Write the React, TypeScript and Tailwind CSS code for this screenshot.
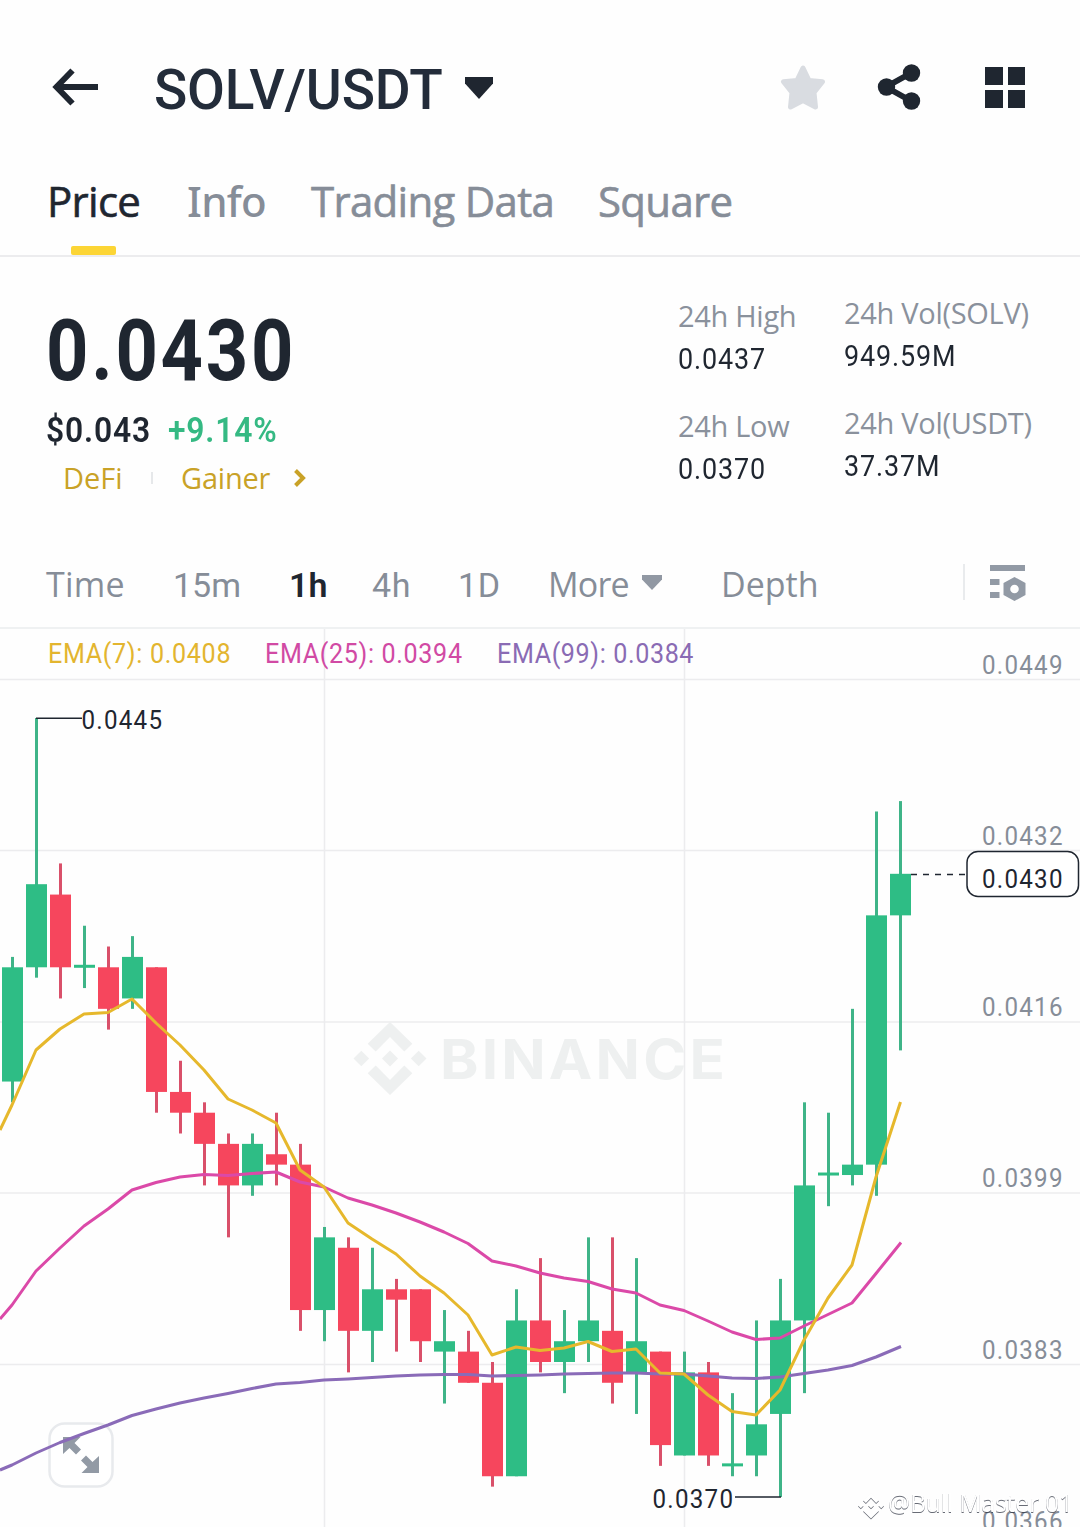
import React from "react";

type Candle = [open: number, close: number, high: number, low: number];

// Prices in ticks of 0.0001
const CANDLES: Candle[] = [
    [410, 421, 422, 408],
    [421, 429, 445, 420],
    [428, 421, 431, 418],
    [421, 421, 425, 419],
    [421, 417, 423, 415],
    [418, 422, 424, 417],
    [421, 409, 421, 407],
    [409, 407, 412, 405],
    [407, 404, 408, 400],
    [404, 400, 405, 395],
    [400, 404, 405, 399],
    [403, 402, 407, 400],
    [402, 388, 404, 386],
    [388, 395, 396, 385],
    [394, 386, 395, 382],
    [386, 390, 394, 383],
    [390, 389, 391, 384],
    [390, 385, 390, 383],
    [384, 385, 388, 379],
    [384, 381, 386, 381],
    [381, 372, 383, 371],
    [372, 387, 390, 372],
    [387, 383, 393, 382],
    [383, 385, 388, 380],
    [385, 387, 395, 383],
    [386, 381, 395, 379],
    [382, 385, 393, 378],
    [384, 375, 384, 373],
    [374, 382, 384, 374],
    [382, 374, 383, 373],
    [373, 373, 380, 372],
    [374, 377, 387, 372],
    [378, 387, 391, 370],
    [387, 400, 408, 380],
    [401, 401, 407, 398],
    [401, 402, 417, 400],
    [402, 426, 436, 399],
    [426, 430, 437, 413],
];

const EMA7 =
    "0,1130 12,1105 36,1050 60,1029 84,1014 108,1012.5 132,999 156,1023 180,1045 204,1070 228,1099 252,1110 276,1123 300,1170 324,1187 348,1223 372,1239 396,1254 420,1276 444,1293 468,1315 492,1355 516,1347 540,1350.5 564,1348 588,1341.5 612,1351.5 636,1349 660,1373 684,1374 708,1395 732,1411.5 756,1415 780,1390 804,1340 828,1298 852,1265 876,1177 900.5,1102";
const EMA25 =
    "0,1319 12,1305 36,1271 60,1248 84,1226 108,1209 132,1190 156,1182.5 180,1177 204,1174.5 228,1175.5 252,1173.5 276,1172 300,1182 324,1187 348,1198 372,1205 396,1213 420,1222 444,1232 468,1243.5 492,1261 516,1266 540,1273 564,1278 588,1281.5 612,1289 636,1293 660,1305 684,1310.5 708,1321 732,1332 756,1339.5 780,1338 804,1326 828,1314.5 852,1303 876,1273.5 901,1242.5";
const EMA99 =
    "0,1470 12,1465 36,1453 60,1442.5 84,1433.5 108,1425 132,1415.5 156,1409 180,1403 204,1398 228,1393.5 252,1388.5 276,1384 300,1382.5 324,1380 348,1379 372,1377.5 396,1376 420,1375 444,1374.5 468,1374.5 492,1376 516,1375.5 540,1375 564,1374 588,1373.5 612,1373 636,1373 660,1374 684,1374 708,1376 732,1378 756,1378.5 780,1377 804,1373.5 828,1370 852,1365.5 876,1357 901,1346.5";

const AXIS = [
    { label: "0.0449", y: 674 },
    { label: "0.0432", y: 845 },
    { label: "0.0416", y: 1016 },
    { label: "0.0399", y: 1187 },
    { label: "0.0383", y: 1359 },
    { label: "0.0366", y: 1530 },
];

const LEGEND = [
    { label: "EMA(7): 0.0408", x: 48, width: 182.5, color: "#e3b52f" },
    { label: "EMA(25): 0.0394", x: 265, width: 197, color: "#d14aa4" },
    { label: "EMA(99): 0.0384", x: 497, width: 196.5, color: "#8a6bb4" },
];

const priceY = (p: number) => 718 + (445 - p) * 10.387;

function Caret({ className }: { className: string }) {
    return (
        <svg viewBox="0 0 28 22" className={className} fill="currentColor" preserveAspectRatio="none">
            <path d="M0 0h28v6.5L14 22 0 6.5z" />
        </svg>
    );
}

function Header() {
    return (
        <div className="flex h-[174px] items-center pl-[52px] text-[#1f2630]">
            <svg viewBox="0 0 46 38" className="h-[38px] w-[46px] shrink-0" fill="none" stroke="currentColor" strokeWidth="6">
                <path d="M5 19h41M20.5 2.5 4.5 19l16 16.500" />
            </svg>
            <h1 className="ml-[56px] w-[311px] whitespace-nowrap pt-[6px] font-[Roboto,sans-serif] text-[55px] font-medium leading-none tracking-[-0.2px] text-[#232c3a]">
                SOLV/USDT
            </h1>
            <Caret className="mt-px h-[22px] w-7 shrink-0" />
            <svg viewBox="0 0 46 48" className="ml-[287px] h-12 w-[46px] shrink-0 text-[#d9dce1]" fill="currentColor" stroke="currentColor" strokeWidth="5" strokeLinejoin="round">
                <path d="M23 5 29 17.500 42.500 18.700 34 29.500 35.500 44 23 37.500 10.500 44 12 29.500 3.500 18.700 17 17.500z" />
            </svg>
            <svg viewBox="0 0 44 48" className="ml-[51px] h-12 w-11 shrink-0" fill="currentColor">
                <path d="M34 10 9 24l25 14" fill="none" stroke="currentColor" strokeWidth="6" />
                <circle cx="34.500" cy="10" r="8.700" />
                <circle cx="9.500" cy="24" r="8.700" />
                <circle cx="34.500" cy="38" r="8.700" />
            </svg>
            <div className="ml-[64px] grid h-[41px] w-10 grid-cols-2 grid-rows-2 gap-[5px]">
                <span className="bg-current" />
                <span className="bg-current" />
                <span className="bg-current" />
                <span className="bg-current" />
            </div>
        </div>
    );
}

function Tabs() {
    return (
        <div className="flex h-[83px] border-b-2 border-[#ececee] pl-[47px] font-['Open_Sans',sans-serif] text-[42px] font-medium leading-[54px] tracking-[-0.7px] text-[#868d98]">
            <div className="flex w-[140px] flex-col text-[#1f2630]">
                <span className="[-webkit-text-stroke:0.6px]">Price</span>
                <span className="ml-6 mt-[18px] h-[9px] w-[45px] rounded-[2px] bg-[#fcd535]" />
            </div>
            <div className="w-[124px] font-['Noto_Sans',sans-serif]">Info</div>
            <div className="w-[287px] [-webkit-text-stroke:0.6px]">Trading Data</div>
            <div className="[-webkit-text-stroke:0.6px]">Square</div>
        </div>
    );
}

function Stat({ label, value }: { label: string; value: string }) {
    return (
        <div className="h-[110px] whitespace-nowrap">
            <div className="h-[43px] font-['Open_Sans',sans-serif] text-[29px] leading-[41px] tracking-[-0.3px] text-[#8a919c]">{label}</div>
            <div className="h-[43px] w-fit origin-left scale-x-[0.93] font-[Roboto,sans-serif] text-[29px] leading-[43px] tracking-[0.900px] text-[#1f2630]">
                {value}
            </div>
        </div>
    );
}

function Summary() {
    return (
        <div className="flex h-[284px] pl-[46px] text-[#1f2630]">
            <div className="w-[632px] pt-[45px] font-[Roboto,sans-serif]">
                <div className="h-[98px] w-fit origin-left scale-x-[0.86] text-[86px] font-bold leading-[98px] tracking-[3.200px]">0.0430</div>
                <div className="flex h-[62px] items-center text-[35px] font-semibold tracking-[0.900px]">
                    <span className="w-[122px] origin-left scale-x-[0.91]">$0.043</span>
                    <span className="origin-left scale-x-[0.91] text-[#35b983]">+9.14%</span>
                </div>
                <div className="flex h-8 items-center pl-[17px] font-['Open_Sans',sans-serif] text-[29px] text-[#c9a227]">
                    <span className="w-[88px]">DeFi</span>
                    <span className="h-3 w-[2px] bg-[#e6e8ea]" />
                    <span className="ml-7 w-[113px] tracking-[-0.2px]">Gainer</span>
                    <svg viewBox="0 0 12 18" className="h-[18px] w-3" fill="none" stroke="currentColor" strokeWidth="4">
                        <path d="m1.500 1.500 7.500 7.500-7.500 7.500" />
                    </svg>
                </div>
            </div>
            <div className="w-[166px] pt-[38px]">
                <Stat label="24h High" value="0.0437" />
                <Stat label="24h Low" value="0.0370" />
            </div>
            <div className="pt-[35px]">
                <Stat label="24h Vol(SOLV)" value="949.59M" />
                <Stat label="24h Vol(USDT)" value="37.37M" />
            </div>
        </div>
    );
}

function Toolbar() {
    return (
        <div className="flex h-[88px] items-center border-b-2 border-[#eff1f2] pl-[46px] font-['Open_Sans',sans-serif] text-[34px] text-[#868d98]">
            <span className="w-[127px] tracking-[0.2px]">Time</span>
            <span className="w-[116px] pt-0.5 font-[Roboto,sans-serif]">15m</span>
            <span className="w-[83px] pt-0.5 font-[Roboto,sans-serif] font-semibold text-[#1f2630]">1h</span>
            <span className="w-[86px] pt-0.5 font-[Roboto,sans-serif] tracking-[0.6px]">4h</span>
            <span className="w-[90px] pt-0.5 font-[Roboto,sans-serif] tracking-[0.6px]">1D</span>
            <span className="w-[94px] tracking-[-0.8px]">More</span>
            <Caret className="mb-1 h-[15px] w-5 text-[#9198a3]" />
            <span className="ml-[59px] w-[242px]">Depth</span>
            <span className="mb-1 h-9 w-[2px] bg-[#e9ebed]" />
            <svg viewBox="0 0 36 36" className="mb-[3px] ml-[25px] h-9 w-9" fill="#929aa5">
                <path d="M0 0h35v6H0zM0 14h9.500v6H0zM0 27h9.500v6H0z" />
                <path fillRule="evenodd" d="m24.500 12 11 6v12l-11 6-11-6V18zM24.500 19.700a4.300 4.300 0 1 0 0 8.600 4.300 4.300 0 0 0 0-8.600z" />
            </svg>
        </div>
    );
}

// Condensed label: narrows the glyphs and spreads them over the given width
function ChartLabel({ x, y, width, fill, children }: { x: number; y: number; width: number; fill: string; children: string }) {
    return (
        <text transform={`translate(${x} ${y}) scale(0.93 1)`} textLength={width / 0.93} fill={fill}>
            {children}
        </text>
    );
}

function CandleBar({ candle, x }: { candle: Candle; x: number }) {
    const [open, close, high, low] = candle;
    const color = close >= open ? "#2ebd85" : "#f6465d";
    const wick = close >= open ? "#3fb488" : "#d9506a";
    const top = priceY(Math.max(open, close));
    const height = Math.max(priceY(Math.min(open, close)) - top, 3);
    return (
        <g>
            <rect x={x - 1.5} y={priceY(high)} width={3} height={priceY(low) - priceY(high)} fill={wick} />
            <rect x={x - 10.5} y={open === close ? top - 2.5 : top} width={21} height={height} fill={color} />
        </g>
    );
}

function Logo({ size }: { size: number }) {
    return (
        <g transform={`scale(${size / 73})`}>
            <path d="M0-36.500 22.300-14.700 14.300-7 0-21.500-14.300-7-22.300-14.700z" />
            <path d="M0 36.500 22.300 14.700 14.300 7 0 21.500-14.300 7-22.300 14.700z" />
            <path d="m0-8 8 8-8 8-8-8zM-28.700-7.800l7.800 7.800-7.800 7.800L-36.500 0zM28.700-7.800 36.500 0 28.700 7.800 20.900 0z" />
        </g>
    );
}

function Chart() {
    return (
        <svg viewBox="0 629 1080 898" className="block h-[898px] w-[1080px] font-[Roboto,sans-serif]">
            <g stroke="#ececee" strokeWidth="1.500">
                {[679.5, 850.5, 1022, 1193, 1364.5].map((y) => (
                    <path key={y} d={`M0 ${y}H1080`} />
                ))}
                <path d="M324.500 629V1527M684.500 629V1527" />
            </g>

            <g fill="#eef0f0">
                <g transform="translate(390 1058.500)">
                    <Logo size={73} />
                </g>
                <text x="440" y="1079" fontSize="55" fontWeight="700" textLength="288" lengthAdjust="spacingAndGlyphs" className="font-[Inter,sans-serif] tracking-[3px]">
                    BINANCE
                </text>
            </g>

            <g fontSize="27">
                {LEGEND.map((l) => (
                    <ChartLabel key={l.label} x={l.x} y={663} width={l.width} fill={l.color}>
                        {l.label}
                    </ChartLabel>
                ))}
            </g>

            <g fontSize="26">
                {AXIS.map((a) => (
                    <ChartLabel key={a.label} x={982} y={a.y} width={80.5} fill="#868d98">
                        {a.label}
                    </ChartLabel>
                ))}
            </g>

            {CANDLES.map((c, i) => (
                <CandleBar key={i} candle={c} x={12.5 + i * 24} />
            ))}

            {/* Expand button */}
            <rect x="49.500" y="1423.500" width="63" height="63" rx="15" fill="#fff" fillOpacity="0.6" stroke="#e8eaed" strokeWidth="2.500" />
            <g fill="#929aa5">
                <path d="M63 1437h17.500l-6 6 6.500 6.500-5 5-6.500-6.500-6.500 6z" />
                <path d="M99 1473H81.500l6-6-6.500-6.500 5-5 6.500 6.500 6.500-6z" />
            </g>

            <g fill="none" strokeWidth="3" strokeLinejoin="round">
                <polyline points={EMA99} stroke="#8a6bb8" />
                <polyline points={EMA25} stroke="#db49a8" />
                <polyline points={EMA7} stroke="#e6b82c" />
            </g>

            {/* High / low markers */}
            <g stroke="#1f2630" strokeWidth="1.500">
                <path d="M36 718.300H82M735 1497H781" />
                <path d="M911 874.500H966" strokeDasharray="6 6" />
            </g>
            <g fontSize="26">
                <ChartLabel x={81.5} y={729} width={80.5} fill="#1f2630">0.0445</ChartLabel>
                <ChartLabel x={652.5} y={1508} width={80.5} fill="#1f2630">0.0370</ChartLabel>
                <rect x="967" y="851.500" width="111.500" height="45" rx="11" fill="#fff" stroke="#1f2630" strokeWidth="1.500" />
                <ChartLabel x={982} y={888} width={80.5} fill="#1f2630">0.0430</ChartLabel>
            </g>

            {/* Author stamp */}
            <g className="fill-white drop-shadow-[0.5px_1px_0.5px_rgba(40,45,60,0.7)]">
                <g transform="translate(871 1505.500)">
                    <Logo size={26} />
                </g>
                <text x="888" y="1512" fontSize="24.500" textLength="185" className="font-['Noto_Sans',sans-serif]">
                    @Bull Master 01
                </text>
            </g>
        </svg>
    );
}

export default function App() {
    return (
        <div className="h-[1527px] w-[1080px] overflow-hidden bg-[#fefefe]">
            <Header />
            <Tabs />
            <Summary />
            <Toolbar />
            <Chart />
        </div>
    );
}
